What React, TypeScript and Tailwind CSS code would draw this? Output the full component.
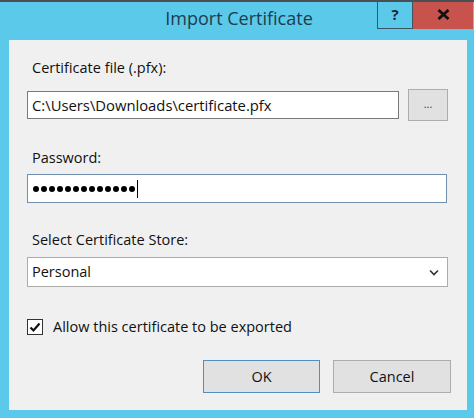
import React from "react";

export default function App() {
  const font = { fontFamily: '"Open Sans", "Noto Sans", sans-serif' };
  const dots = Array.from({ length: 13 });
  return (
    <div
      className="w-[474px] h-[418px] bg-[#5bc9ea] border-t-2 border-[#4a4f55] flex flex-col overflow-hidden text-[#111]"
      style={font}
    >
      {/* Title bar */}
      <div className="relative h-[38px] shrink-0 flex items-center justify-center">
        <span className="text-[18px] leading-[24px] text-[#1c3d4e] -mt-[7px] pl-[4px]">Import Certificate</span>
        <div className="absolute top-[-2px] right-[1px] flex h-[29px]">
          <div className="w-[36px] h-full border border-t-0 border-[#3b5566] bg-[#5bc9ea] flex items-center justify-center">
            <span className="text-[15px] font-bold text-[#16283a] leading-none">?</span>
          </div>
          <div className="w-[60px] h-full bg-[#c8524c] flex items-center justify-center">
            <svg width="13" height="11" viewBox="0 0 13 11">
              <path d="M1.5 1 L11.5 10 M11.5 1 L1.5 10" stroke="#111" strokeWidth="2.8" />
            </svg>
          </div>
        </div>
      </div>

      {/* Content */}
      <div className="ml-[9px] mr-[7px] mb-[8px] flex-1 bg-[#f0f0f0] border-l border-[#e2eef3] pl-[17px] pr-[19px] pt-[18px] pb-[17px] flex flex-col text-[14.5px]">
        <div className="leading-[20px] pl-[5px]">Certificate file (.pfx):</div>
        <div className="mt-[11px] flex items-center">
          <div className="w-[372px] h-[28px] bg-white border border-[#7a7a7a] flex items-center pl-[4px] text-[14.8px]">
            C:\Users\Downloads\certificate.pfx
          </div>
          <div className="ml-[9px] w-[40px] h-[32px] bg-[#e1e1e1] border border-[#adadad] flex items-center justify-center text-[11px] text-[#444] pb-[2px]">
            ...
          </div>
        </div>

        <div className="mt-[27px] leading-[20px] pl-[5px]">Password:</div>
        <div className="mt-[6px] w-[420px] h-[29px] bg-white border border-[#6f8fae] flex items-center pl-[5px]">
          <div className="flex gap-[2px] items-center">
            {dots.map((_, i) => (
              <span key={i} className="w-[6px] h-[6px] rounded-full bg-black" />
            ))}
          </div>
          <span className="ml-[2px] w-[1px] h-[18px] bg-black" />
        </div>

        <div className="mt-[27px] leading-[20px] pl-[5px]">Select Certificate Store:</div>
        <div className="mt-[7px] w-[421px] h-[30px] bg-white border border-[#acacac] flex items-center justify-between pl-[4px] pr-[8px]">
          <span>Personal</span>
          <svg width="10" height="7" viewBox="0 0 10 7">
            <path d="M1 1.5 L5 5.5 L9 1.5" stroke="#333" strokeWidth="1.6" fill="none" />
          </svg>
        </div>

        <div className="mt-[30px] flex items-center h-[20px]">
          <div className="w-[16px] h-[16px] bg-white border border-[#333] flex items-center justify-center">
            <svg width="12" height="11" viewBox="0 0 12 11">
              <path d="M1.5 5.5 L4.5 8.5 L10.5 1.5" stroke="#111" strokeWidth="2.2" fill="none" />
            </svg>
          </div>
          <span className="ml-[10px] leading-[20px]">Allow this certificate to be exported</span>
        </div>

        <div className="mt-[23px] flex justify-end gap-[13px]">
          <div className="w-[117px] h-[33px] bg-[#e1e1e1] border border-[#4f8fc4] flex items-center justify-center">
            OK
          </div>
          <div className="w-[118px] h-[33px] bg-[#e1e1e1] border border-[#adadad] flex items-center justify-center -mr-[3px]">
            Cancel
          </div>
        </div>
      </div>
    </div>
  );
}
